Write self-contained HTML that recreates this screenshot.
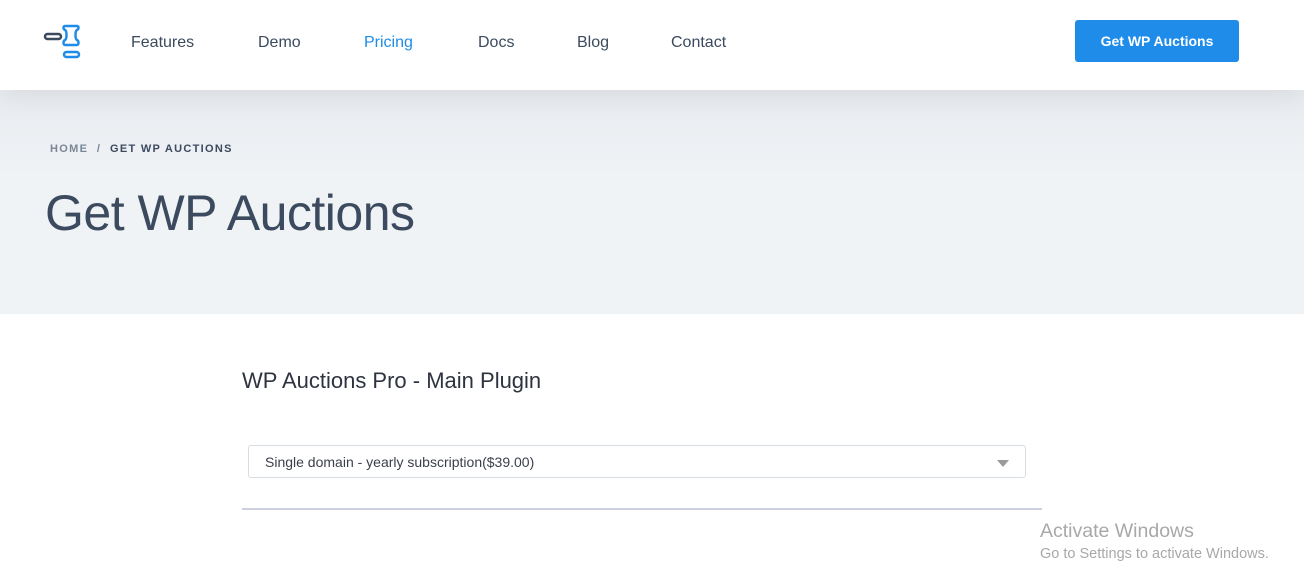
<!DOCTYPE html>
<html><head><meta charset="utf-8"><style>
*{margin:0;padding:0;box-sizing:border-box}
body{width:1304px;height:570px;overflow:hidden;background:#fff;font-family:"Liberation Sans",sans-serif;position:relative}
.hdr{position:absolute;left:0;top:0;width:1304px;height:90px;background:#fff;box-shadow:0 4px 30px rgba(0,0,0,.08);z-index:2}
.nav a{position:absolute;top:34px;font-size:16px;color:#3b4a5e;text-decoration:none}
.btn{position:absolute;left:1075px;top:20px;width:164px;height:42px;background:#1e8ce8;border-radius:3px;color:#fff;font-size:14px;font-weight:bold;text-align:center;line-height:42px}
.hero{position:absolute;left:0;top:90px;width:1304px;height:224px;background:linear-gradient(#e8ebef,#f0f3f6 40%,#f0f3f6)}
.bc{position:absolute;left:50px;top:53px;font-size:11px;font-weight:bold;letter-spacing:1.3px;color:#7a8796}
.bc b{color:#3b4a5e}
h1{position:absolute;left:45px;top:94px;font-size:50px;font-weight:normal;color:#3b4a5e;letter-spacing:-0.5px}
h2{position:absolute;left:242px;top:368px;font-size:22px;font-weight:normal;color:#2e3340}
.sel{position:absolute;left:248px;top:445px;width:778px;height:33px;border:1px solid #d6dde4;border-radius:3px;font-size:14px;color:#3a3f4a;padding:8px 0 0 16px}
.sel i{position:absolute;right:16px;top:14px;border-left:6px solid transparent;border-right:6px solid transparent;border-top:7px solid #9a9a9a}
.line{position:absolute;left:242px;top:508px;width:800px;height:2px;background:#cdd0e0}
.win{position:absolute;left:1040px;top:520px;color:#a8a8a8;font-size:19.5px}
.win2{position:absolute;left:1040px;top:546px;color:#a8a8a8;font-size:14.5px}
</style></head><body>
<div class="hdr">
<svg style="position:absolute;left:43px;top:22px" width="40" height="38" viewBox="0 0 40 38">
<rect x="2" y="12" width="16" height="5" rx="2.5" fill="none" stroke="#3b4a5e" stroke-width="2.5"/>
<path d="M22 4h12c2 0 2 3 0 4c-2 1-2 9 0 10c2 1 2 5 0 5H22c-2 0-2-4 0-5c2-1 2-9 0-10c-2-1-2-4 0-4z" fill="none" stroke="#1e8ce8" stroke-width="2.5"/>
<rect x="21" y="30" width="15" height="5" rx="2.5" fill="none" stroke="#1e8ce8" stroke-width="2.5"/>
</svg>
<div class="nav">
<a style="left:131px">Features</a><a style="left:258px">Demo</a><a style="left:364px;color:#1e8ce8">Pricing</a><a style="left:478px">Docs</a><a style="left:577px">Blog</a><a style="left:671px">Contact</a>
</div>
<div class="btn">Get WP Auctions</div>
</div>
<div class="hero">
<div class="bc">HOME&nbsp; /&nbsp; <b>GET WP AUCTIONS</b></div>
<h1>Get WP Auctions</h1>
</div>
<h2>WP Auctions Pro - Main Plugin</h2>
<div class="sel">Single domain - yearly subscription($39.00)<i></i></div>
<div class="line"></div>
<div class="win">Activate Windows</div>
<div class="win2">Go to Settings to activate Windows.</div>
</body></html>
